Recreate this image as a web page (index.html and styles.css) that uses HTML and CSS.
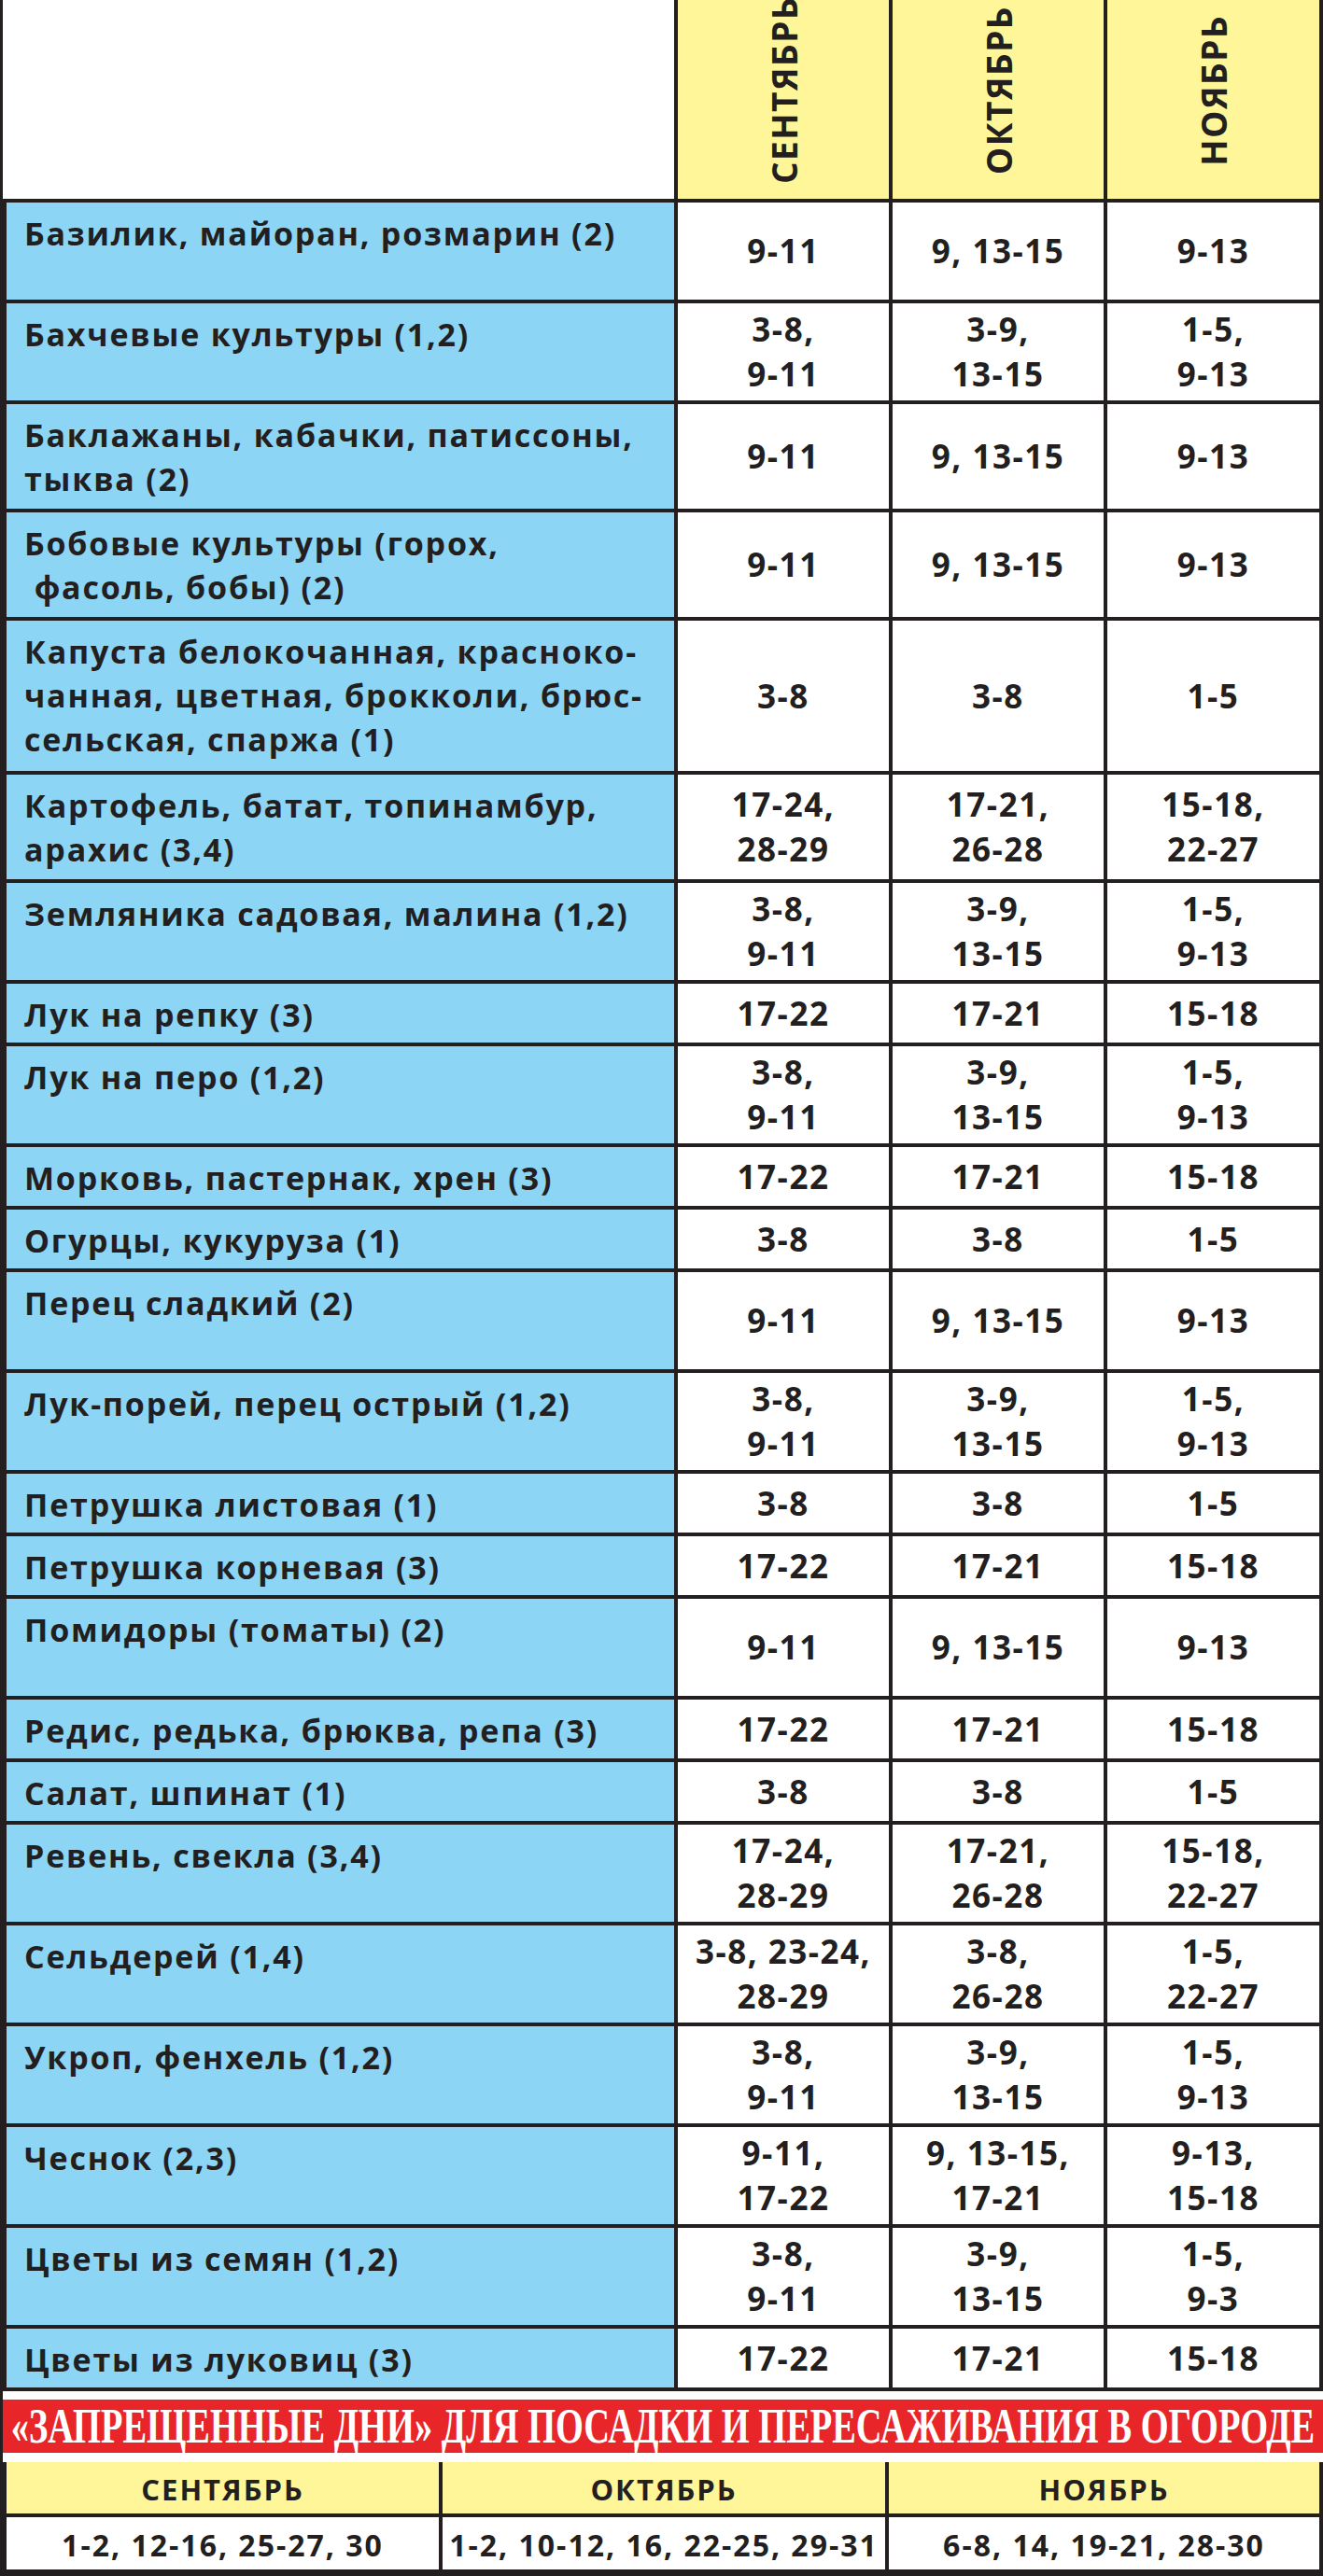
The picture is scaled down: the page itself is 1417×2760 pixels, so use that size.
FILE: index.html
```html
<!DOCTYPE html>
<html lang="ru">
<head>
<meta charset="utf-8">
<title>Календарь посадок</title>
<link rel="stylesheet" href="styles.css">
</head>
<body>
<div class="page">
  <div class="head">
    <div class="corner"></div>
    <div class="month"><span>СЕНТЯБРЬ</span></div>
    <div class="month"><span>ОКТЯБРЬ</span></div>
    <div class="month"><span>НОЯБРЬ</span></div>
  </div>

  <div class="row d"><div class="name">Базилик, майоран, розмарин (2)</div><div class="val">9-11</div><div class="val">9, 13-15</div><div class="val">9-13</div></div>
  <div class="row d"><div class="name">Бахчевые культуры (1,2)</div><div class="val">3-8,<br>9-11</div><div class="val">3-9,<br>13-15</div><div class="val">1-5,<br>9-13</div></div>
  <div class="row t"><div class="name">Баклажаны, кабачки, патиссоны,<br>тыква (2)</div><div class="val">9-11</div><div class="val">9, 13-15</div><div class="val">9-13</div></div>
  <div class="row t"><div class="name">Бобовые культуры (горох,<br>&nbsp;фасоль, бобы) (2)</div><div class="val">9-11</div><div class="val">9, 13-15</div><div class="val">9-13</div></div>
  <div class="row q"><div class="name">Капуста белокочанная, красноко-<br>чанная, цветная, брокколи, брюс-<br>сельская, спаржа (1)</div><div class="val">3-8</div><div class="val">3-8</div><div class="val">1-5</div></div>
  <div class="row t"><div class="name">Картофель, батат, топинамбур,<br>арахис (3,4)</div><div class="val">17-24,<br>28-29</div><div class="val">17-21,<br>26-28</div><div class="val">15-18,<br>22-27</div></div>
  <div class="row d"><div class="name">Земляника садовая, малина (1,2)</div><div class="val">3-8,<br>9-11</div><div class="val">3-9,<br>13-15</div><div class="val">1-5,<br>9-13</div></div>
  <div class="row s"><div class="name">Лук на репку (3)</div><div class="val">17-22</div><div class="val">17-21</div><div class="val">15-18</div></div>
  <div class="row d"><div class="name">Лук на перо (1,2)</div><div class="val">3-8,<br>9-11</div><div class="val">3-9,<br>13-15</div><div class="val">1-5,<br>9-13</div></div>
  <div class="row s"><div class="name">Морковь, пастернак, хрен (3)</div><div class="val">17-22</div><div class="val">17-21</div><div class="val">15-18</div></div>
  <div class="row s"><div class="name">Огурцы, кукуруза (1)</div><div class="val">3-8</div><div class="val">3-8</div><div class="val">1-5</div></div>
  <div class="row d"><div class="name">Перец сладкий (2)</div><div class="val">9-11</div><div class="val">9, 13-15</div><div class="val">9-13</div></div>
  <div class="row d"><div class="name">Лук-порей, перец острый (1,2)</div><div class="val">3-8,<br>9-11</div><div class="val">3-9,<br>13-15</div><div class="val">1-5,<br>9-13</div></div>
  <div class="row s"><div class="name">Петрушка листовая (1)</div><div class="val">3-8</div><div class="val">3-8</div><div class="val">1-5</div></div>
  <div class="row s"><div class="name">Петрушка корневая (3)</div><div class="val">17-22</div><div class="val">17-21</div><div class="val">15-18</div></div>
  <div class="row d"><div class="name">Помидоры (томаты) (2)</div><div class="val">9-11</div><div class="val">9, 13-15</div><div class="val">9-13</div></div>
  <div class="row s"><div class="name">Редис, редька, брюква, репа (3)</div><div class="val">17-22</div><div class="val">17-21</div><div class="val">15-18</div></div>
  <div class="row s"><div class="name">Салат, шпинат (1)</div><div class="val">3-8</div><div class="val">3-8</div><div class="val">1-5</div></div>
  <div class="row d"><div class="name">Ревень, свекла (3,4)</div><div class="val">17-24,<br>28-29</div><div class="val">17-21,<br>26-28</div><div class="val">15-18,<br>22-27</div></div>
  <div class="row d"><div class="name">Сельдерей (1,4)</div><div class="val">3-8, 23-24,<br>28-29</div><div class="val">3-8,<br>26-28</div><div class="val">1-5,<br>22-27</div></div>
  <div class="row d"><div class="name">Укроп, фенхель (1,2)</div><div class="val">3-8,<br>9-11</div><div class="val">3-9,<br>13-15</div><div class="val">1-5,<br>9-13</div></div>
  <div class="row d"><div class="name">Чеснок (2,3)</div><div class="val">9-11,<br>17-22</div><div class="val">9, 13-15,<br>17-21</div><div class="val">9-13,<br>15-18</div></div>
  <div class="row d"><div class="name">Цветы из семян (1,2)</div><div class="val">3-8,<br>9-11</div><div class="val">3-9,<br>13-15</div><div class="val">1-5,<br>9-3</div></div>
  <div class="row s"><div class="name">Цветы из луковиц (3)</div><div class="val">17-22</div><div class="val">17-21</div><div class="val">15-18</div></div>

  <div class="banner"><span>«ЗАПРЕЩЕННЫЕ ДНИ» ДЛЯ ПОСАДКИ И ПЕРЕСАЖИВАНИЯ В ОГОРОДЕ</span></div>

  <div class="btable">
    <div class="bh">СЕНТЯБРЬ</div>
    <div class="bh">ОКТЯБРЬ</div>
    <div class="bh">НОЯБРЬ</div>
    <div class="bv">1-2, 12-16, 25-27, 30</div>
    <div class="bv">1-2, 10-12, 16, 22-25, 29-31</div>
    <div class="bv">6-8, 14, 19-21, 28-30</div>
  </div>
</div>
</body>
</html>
```

FILE: styles.css
```css
html, body {
  margin: 0;
  padding: 0;
  background: #ffffff;
}

body {
  font-family: "Open Sans", "Liberation Sans", sans-serif;
  font-weight: 700;
  color: #231f20;
  width: 1417px;
}

.page {
  width: 1414px;
  border-left: 3px solid #231f20;
}

/* ---------- header with rotated months ---------- */
.head {
  display: grid;
  grid-template-columns: 719px 226px 226px 227px;
  column-gap: 4px;
  height: 217px;
  box-sizing: border-box;
  background: #231f20;
  border-right: 4px solid #231f20;
  border-bottom: 4px solid #231f20;
}

.corner {
  background: #ffffff;
}

.month {
  background: #fff69a;
  display: flex;
  align-items: center;
  justify-content: center;
  padding-bottom: 19px;
  overflow: hidden;
}

.month span {
  writing-mode: vertical-rl;
  transform: rotate(180deg);
  font-size: 37px;
  letter-spacing: 1.5px;
  line-height: 1;
  white-space: nowrap;
}

/* ---------- main rows ---------- */
.row {
  display: grid;
  grid-template-columns: 715px 226px 226px 227px;
  column-gap: 4px;
  box-sizing: border-box;
  background: #231f20;
  border-left: 4px solid #231f20;
  border-right: 4px solid #231f20;
  border-bottom: 4px solid #231f20;
}

.row.s { height: 67px; }
.row.d { height: 108px; }
.row.t { height: 116px; }
.row.q { height: 165px; }

.name {
  background: #8dd5f5;
  padding: 10px 6px 0 19px;
  font-size: 34px;
  line-height: 47px;
  letter-spacing: 1.8px;
  white-space: nowrap;
  overflow: hidden;
}

.val {
  background: #ffffff;
  display: flex;
  flex-direction: column;
  align-items: center;
  justify-content: center;
  text-align: center;
  font-size: 35px;
  line-height: 48px;
  letter-spacing: 1.5px;
  white-space: nowrap;
}

/* ---------- red banner ---------- */
.banner {
  margin-top: 9px;
  height: 57px;
  background: #e8262a;
  display: flex;
  align-items: center;
  justify-content: center;
  overflow: hidden;
}

.banner span {
  font-family: "Liberation Serif", "Times New Roman", serif;
  font-weight: 700;
  font-size: 53px;
  line-height: 1;
  color: #ffffff;
  white-space: nowrap;
  letter-spacing: 0;
  transform: scaleX(0.725);
  flex-shrink: 0;
}

/* ---------- forbidden days table ---------- */
.btable {
  margin-top: 10px;
  display: grid;
  grid-template-columns: 463px 474px 461px;
  grid-template-rows: 55px 56px;
  gap: 4px;
  background: #231f20;
  border-left: 4px solid #231f20;
  border-right: 4px solid #231f20;
  border-bottom: 7px solid #231f20;
}

.bh,
.bv {
  display: flex;
  align-items: center;
  justify-content: center;
  padding-top: 3px;
  box-sizing: border-box;
  white-space: nowrap;
}

.bh {
  background: #fff69a;
  font-size: 31px;
  letter-spacing: 2px;
}

.bv {
  background: #ffffff;
  font-size: 32px;
  letter-spacing: 2px;
}
```
